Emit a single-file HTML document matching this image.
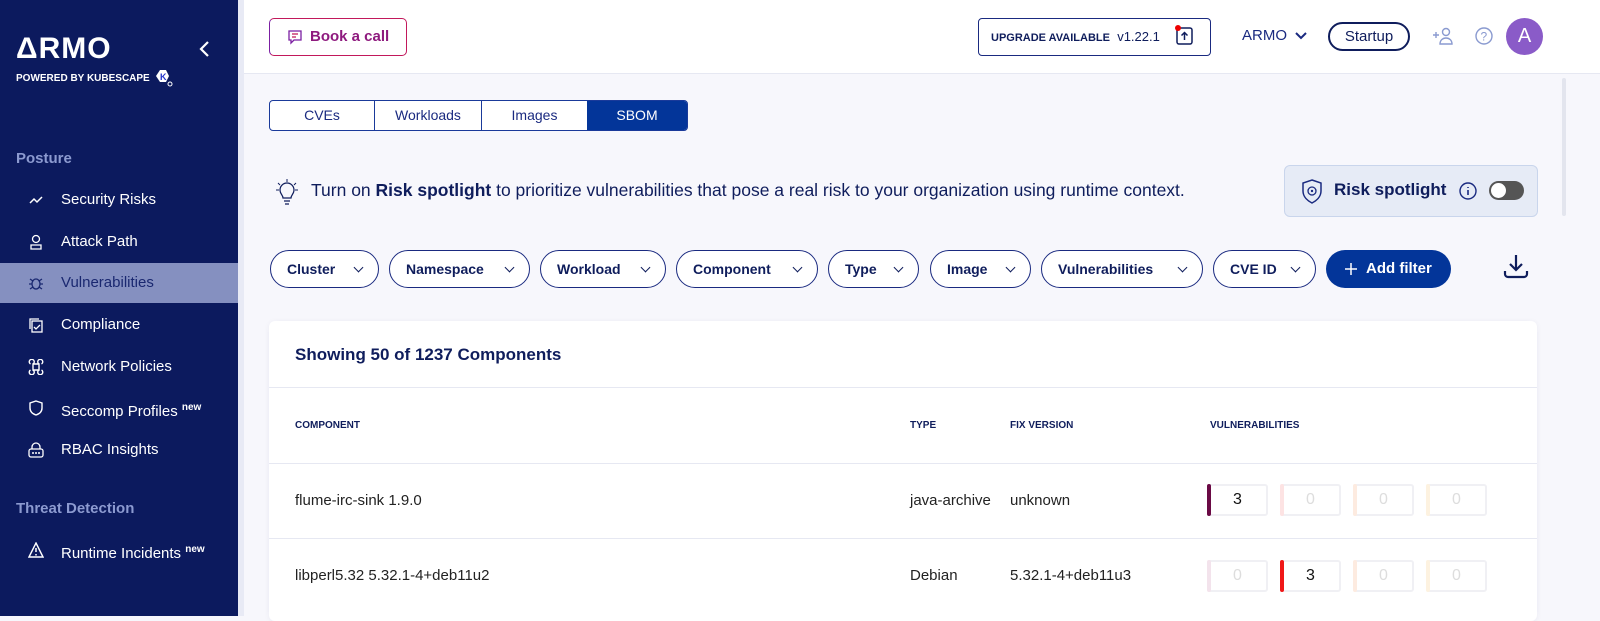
<!DOCTYPE html>
<html><head><style>
*{box-sizing:border-box;margin:0;padding:0}
body{width:1600px;height:616px;overflow:hidden;font-family:"Liberation Sans",sans-serif;background:#f7f7fc;position:relative;color:#0f1d5c}
.sb{position:absolute;left:0;top:0;width:238px;height:616px;background:#0c1a5e}
.sbedge{position:absolute;left:238px;top:0;width:6px;height:616px;background:#e8eaf5}
.logo{position:absolute;left:16px;top:32px;color:#fff;font-weight:bold;font-size:30px;letter-spacing:1px}
.pw{position:absolute;left:16px;top:73px;color:#fff;font-weight:bold;font-size:10px}
.sec{position:absolute;left:16px;color:#8c9ad0;font-weight:bold;font-size:15px}
.it{position:absolute;left:0;width:238px;height:40px;color:#fff;font-size:15px;line-height:40px;padding-left:61px}
.it svg{position:absolute;left:28px;top:12px}
.it sup{font-size:10px;font-weight:bold}
.hdr{position:absolute;left:244px;top:0;right:0;height:74px;background:#fff;border-bottom:1px solid #e6e8f2}
.abs{position:absolute}
.pill{position:absolute;top:250px;height:38px;border:1px solid #1a2a80;border-radius:19px;background:#fff;font-weight:bold;font-size:14px;color:#0f1d5c;line-height:36px;padding-left:16px}
.pill:after{content:"";position:absolute;right:16px;top:13px;width:6px;height:6px;border-right:1.5px solid #0f1d5c;border-bottom:1.5px solid #0f1d5c;transform:rotate(45deg)}
.card{position:absolute;left:269px;top:321px;width:1268px;height:300px;background:#fff;border-radius:6px;box-shadow:0 1px 6px rgba(20,30,90,.06)}
.line{position:absolute;left:0;right:0;height:1px;background:#e6e8f2}
.th{position:absolute;top:99px;font-size:10px;font-weight:bold;color:#0f1d5c}
.td{position:absolute;font-size:15px;color:#222}
.vb{position:absolute;width:61px;height:32px;border:2px solid #f0f0f4;border-radius:3px;text-align:center;line-height:28px;font-size:16px;color:#ddd}
.vb.on{color:#111}
.vb i{position:absolute;left:-2px;top:-2px;width:4px;height:32px;border-radius:2px}
</style></head><body>
<div class="sb"></div><div class="sbedge"></div>
<div class="logo">ΔRMO</div>
<svg class="abs" style="left:198px;top:40px" width="14" height="18"><path d="M10 2L3 9l7 7" stroke="#fff" stroke-width="2.2" fill="none"/></svg>
<div class="pw">POWERED BY KUBESCAPE</div>
<svg class="abs" style="left:153px;top:68px" width="22" height="20"><polygon points="3,8 7,2 13,2 16,8 13,14 7,14" fill="#fff"/><text x="7" y="12" font-size="9" font-weight="bold" fill="#2233cc" font-family="Liberation Sans">K</text><circle cx="17" cy="16" r="2" stroke="#fff" fill="none"/></svg>
<div class="sec" style="top:150px">Posture</div>
<div class="it" style="top:180px"><svg width="16" height="16"><path d="M2 11l4-4 3 3 5-5" stroke="#fff" stroke-width="1.5" fill="none"/></svg>Security Risks</div>
<div class="it" style="top:222px"><svg width="16" height="16"><circle cx="8" cy="5" r="3.5" stroke="#fff" fill="none" stroke-width="1.3"/><path d="M3 15v-4h10v4z" stroke="#fff" fill="none" stroke-width="1.3"/></svg>Attack Path</div>
<div class="it" style="top:263px;background:#8590c0;color:#1a2870"><svg width="16" height="16"><ellipse cx="8" cy="9" rx="4" ry="5" stroke="#1a2870" fill="none" stroke-width="1.3"/><path d="M1 9h3M12 9h3M2 4l3 2M14 4l-3 2M2 14l3-2M14 14l-3-2" stroke="#1a2870" stroke-width="1.3"/></svg>Vulnerabilities</div>
<div class="it" style="top:305px"><svg width="16" height="16"><rect x="4" y="4" width="10" height="11" stroke="#fff" fill="none" stroke-width="1.3"/><path d="M2 12V2h9M6 10l2 2 4-4" stroke="#fff" fill="none" stroke-width="1.3"/></svg>Compliance</div>
<div class="it" style="top:347px"><svg width="16" height="16"><path d="M5 5h6v6H5zM5 5a2.5 2.5 0 1 0-2.5 0M11 5a2.5 2.5 0 1 1 2.5 0M5 11a2.5 2.5 0 1 1-2.5 0M11 11a2.5 2.5 0 1 0 2.5 0" stroke="#fff" fill="none" stroke-width="1.4"/></svg>Network Policies</div>
<div class="it" style="top:388px"><svg width="16" height="16"><path d="M8 1l6 2v5c0 4-3 6-6 7-3-1-6-3-6-7V3z" stroke="#fff" fill="none" stroke-width="1.4"/></svg>Seccomp Profiles <sup>new</sup></div>
<div class="it" style="top:430px"><svg width="16" height="16"><rect x="1" y="7" width="14" height="8" rx="2" stroke="#fff" fill="none" stroke-width="1.3"/><path d="M4 7V5a4 4 0 0 1 8 0v2" stroke="#fff" fill="none" stroke-width="1.3"/><circle cx="5" cy="11" r="1" fill="#fff"/><circle cx="8" cy="11" r="1" fill="#fff"/><circle cx="11" cy="11" r="1" fill="#fff"/></svg>RBAC Insights</div>
<div class="sec" style="top:500px">Threat Detection</div>
<div class="it" style="top:530px"><svg width="16" height="16"><path d="M8 1l7 14H1z" stroke="#fff" fill="none" stroke-width="1.4"/><path d="M8 6v4M8 12v1.5" stroke="#fff" stroke-width="1.5"/></svg>Runtime Incidents <sup>new</sup></div>

<div class="hdr"></div>
<div class="abs" style="left:269px;top:18px;width:138px;height:38px;border:1px solid #c2185b;border-left-color:#7b1fa2;border-radius:5px;background:#fff;font-weight:bold;font-size:15px;color:#8e1a7e;line-height:36px;padding-left:40px">Book a call</div>
<svg class="abs" style="left:287px;top:29px" width="16" height="16"><path d="M2 2h12v9H7l-3 3v-3H2z" stroke="#7b1fa2" fill="none" stroke-width="1.3"/><path d="M5 5h6M5 8h4" stroke="#c2185b" stroke-width="1.2"/></svg>
<div class="abs" style="left:978px;top:18px;width:233px;height:38px;border:1px solid #1a2a80;border-radius:4px;background:#fff;font-size:13px;line-height:36px;padding-left:12px;color:#0f1d5c"><b style="font-size:11px">UPGRADE AVAILABLE</b>&nbsp; v1.22.1</div>
<svg class="abs" style="left:1174px;top:24px" width="22" height="24"><rect x="3" y="4" width="15" height="16" rx="2" stroke="#0f1d5c" fill="none" stroke-width="1.5"/><path d="M10.5 16V9M7.5 11.5l3-3 3 3" stroke="#0f1d5c" fill="none" stroke-width="1.5"/><circle cx="4" cy="4" r="3" fill="#e00"/></svg>
<div class="abs" style="left:1242px;top:27px;font-size:15px;color:#1a2a80">ARMO</div>
<svg class="abs" style="left:1294px;top:30px" width="14" height="12"><path d="M2 3l5 5 5-5" stroke="#1a2a80" stroke-width="2" fill="none"/></svg>
<div class="abs" style="left:1328px;top:22px;width:82px;height:29px;border:2px solid #0f1d5c;border-radius:15px;font-size:15px;line-height:25px;text-align:center;color:#0f1d5c">Startup</div>
<svg class="abs" style="left:1432px;top:26px" width="22" height="20"><path d="M1 9h6M4 6v6" stroke="#8a9ad0" stroke-width="1.4"/><circle cx="14" cy="6" r="3.5" stroke="#8a9ad0" fill="none" stroke-width="1.4"/><path d="M8 18c0-4 3-6 6-6s6 2 6 6z" stroke="#8a9ad0" fill="none" stroke-width="1.4"/></svg>
<svg class="abs" style="left:1474px;top:26px" width="20" height="20"><circle cx="10" cy="10" r="8" stroke="#8a9ad0" fill="none" stroke-width="1.4"/><text x="6.5" y="14.5" font-size="12" fill="#8a9ad0" font-family="Liberation Sans">?</text></svg>
<div class="abs" style="left:1506px;top:18px;width:37px;height:37px;border-radius:50%;background:#8a5bc8;color:#fff;font-size:20px;line-height:37px;text-align:center">A</div>
<div class="abs" style="left:1562px;top:78px;width:4px;height:138px;background:#e3e5ee;border-radius:2px"></div>

<div class="abs" style="left:269px;top:100px;width:419px;height:31px;border:1px solid #1a3a9a;border-radius:4px;background:#fff;display:flex;font-size:14px;color:#1a2a80;line-height:29px;overflow:hidden">
<div style="width:105px;text-align:center;border-right:1px solid #1a3a9a">CVEs</div>
<div style="width:107px;text-align:center;border-right:1px solid #1a3a9a">Workloads</div>
<div style="width:105px;text-align:center">Images</div>
<div style="flex:1;text-align:center;background:#033599;color:#fff">SBOM</div></div>

<svg class="abs" style="left:275px;top:178px" width="24" height="30"><path d="M12 1v3M3 5l2 2M21 5l-2 2M1 12h3M20 12h3" stroke="#0f1d5c" stroke-width="1"/><path d="M8 20c0-3-3-4-3-8a7 7 0 0 1 14 0c0 4-3 5-3 8z" stroke="#0f1d5c" fill="none" stroke-width="1.2"/><path d="M9 23h6M10 26h4" stroke="#0f1d5c" stroke-width="1.2"/></svg>
<div class="abs" style="left:311px;top:180px;font-size:17.5px;color:#0f1d5c">Turn on <b>Risk spotlight</b> to prioritize vulnerabilities that pose a real risk to your organization using runtime context.</div>
<div class="abs" style="left:1284px;top:165px;width:254px;height:52px;background:#e6ebf6;border:1px solid #c9d5ec;border-radius:6px"></div>
<svg class="abs" style="left:1301px;top:179px" width="22" height="26"><path d="M11 1l9 3v8c0 6-5 10-9 12-4-2-9-6-9-12V4z" stroke="#1a2a80" fill="none" stroke-width="1.5"/><circle cx="11" cy="12" r="4" stroke="#1a2a80" fill="none" stroke-width="1.3"/><circle cx="11" cy="12" r="1.2" fill="#1a2a80"/></svg>
<div class="abs" style="left:1334px;top:180px;font-size:17px;font-weight:bold;color:#0f1d5c">Risk spotlight</div>
<svg class="abs" style="left:1458px;top:181px" width="20" height="20"><circle cx="10" cy="10" r="8" stroke="#1a2a80" fill="none" stroke-width="1.4"/><path d="M10 9v5M10 6v1" stroke="#1a2a80" stroke-width="1.6"/></svg>
<div class="abs" style="left:1489px;top:181px;width:35px;height:19px;border-radius:10px;background:#555"><div style="position:absolute;left:2px;top:2px;width:15px;height:15px;border-radius:50%;background:#fff"></div></div>

<div class="pill" style="left:270px;width:109px">Cluster</div>
<div class="pill" style="left:389px;width:141px">Namespace</div>
<div class="pill" style="left:540px;width:126px">Workload</div>
<div class="pill" style="left:676px;width:142px">Component</div>
<div class="pill" style="left:828px;width:91px">Type</div>
<div class="pill" style="left:930px;width:101px">Image</div>
<div class="pill" style="left:1041px;width:162px">Vulnerabilities</div>
<div class="pill" style="left:1213px;width:103px">CVE ID</div>
<div class="abs" style="left:1326px;top:250px;width:125px;height:38px;border-radius:19px;background:#033599;color:#fff;font-weight:bold;font-size:15px;line-height:38px;padding-left:40px">Add filter</div>
<svg class="abs" style="left:1343px;top:261px" width="16" height="16"><path d="M8 2v12M2 8h12" stroke="#fff" stroke-width="1.5"/></svg>
<svg class="abs" style="left:1502px;top:252px" width="28" height="28"><path d="M14 3v15M8 12l6 6 6-6" stroke="#0f1d5c" stroke-width="2.2" fill="none"/><path d="M3 19v3a3 3 0 0 0 3 3h16a3 3 0 0 0 3-3v-3" stroke="#0f1d5c" stroke-width="2.2" fill="none"/></svg>

<div class="card">
<div class="abs" style="left:26px;top:24px;font-size:17px;font-weight:bold;color:#0f1d5c">Showing 50 of 1237 Components</div>
<div class="line" style="top:66px"></div>
<div class="th" style="left:26px">COMPONENT</div>
<div class="th" style="left:641px">TYPE</div>
<div class="th" style="left:741px">FIX VERSION</div>
<div class="th" style="left:941px">VULNERABILITIES</div>
<div class="line" style="top:142px"></div>
<div class="td" style="left:26px;top:171px">flume-irc-sink 1.9.0</div>
<div class="td" style="left:641px;top:171px">java-archive</div>
<div class="td" style="left:741px;top:171px">unknown</div>
<div class="line" style="top:217px"></div>
<div class="td" style="left:26px;top:246px">libperl5.32 5.32.1-4+deb11u2</div>
<div class="td" style="left:641px;top:246px">Debian</div>
<div class="td" style="left:741px;top:246px">5.32.1-4+deb11u3</div>
<div class="vb on" style="left:938px;top:163px"><i style="background:#6a0a45"></i>3</div>
<div class="vb" style="left:1011px;top:163px"><i style="background:#fde3e3"></i>0</div>
<div class="vb" style="left:1084px;top:163px"><i style="background:#fdebe0"></i>0</div>
<div class="vb" style="left:1157px;top:163px"><i style="background:#fdf2e0"></i>0</div>
<div class="vb" style="left:938px;top:239px"><i style="background:#f3e3ec"></i>0</div>
<div class="vb on" style="left:1011px;top:239px"><i style="background:#f01818"></i>3</div>
<div class="vb" style="left:1084px;top:239px"><i style="background:#fdebe0"></i>0</div>
<div class="vb" style="left:1157px;top:239px"><i style="background:#fdf2e0"></i>0</div>
</div>
</body></html>
